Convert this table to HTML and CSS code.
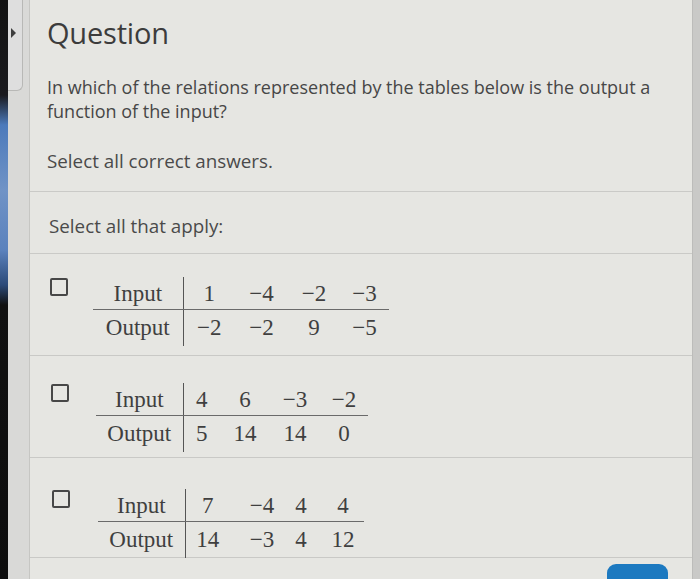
FILE: index.html
```html
<!DOCTYPE html>
<html>
<head>
<meta charset="utf-8">
<link rel="stylesheet" href="styles.css">
</head>
<body>
<div class="edge"></div>
<div class="gutter">
  <div class="tab"><span class="arrow"></span></div>
</div>
<main class="panel">
  <section class="head">
    <h1 class="title">Question</h1>
    <p class="prompt">In which of the relations represented by the tables below is the output a function of the input?</p>
    <p class="hint">Select all correct answers.</p>
  </section>
  <section class="instr">Select all that apply:</section>

  <section class="option o1">
    <span class="check"></span>
    <table class="rel t1">
      <colgroup><col class="c0"><col class="c1"><col class="c2"><col class="c3"><col class="c4"></colgroup>
      <tr class="hdr"><th>Input</th><td>1</td><td>−4</td><td>−2</td><td>−3</td></tr>
      <tr><th>Output</th><td>−2</td><td>−2</td><td>9</td><td>−5</td></tr>
    </table>
  </section>

  <section class="option o2">
    <span class="check"></span>
    <table class="rel t2">
      <colgroup><col class="c0"><col class="c1"><col class="c2"><col class="c3"><col class="c4"></colgroup>
      <tr class="hdr"><th>Input</th><td>4</td><td>6</td><td>−3</td><td>−2</td></tr>
      <tr><th>Output</th><td>5</td><td>14</td><td>14</td><td>0</td></tr>
    </table>
  </section>

  <section class="option o3">
    <span class="check"></span>
    <table class="rel t3">
      <colgroup><col class="c0"><col class="c1"><col class="c2"><col class="c3"><col class="c4"></colgroup>
      <tr class="hdr"><th>Input</th><td>7</td><td>−4</td><td>4</td><td>4</td></tr>
      <tr><th>Output</th><td>14</td><td>−3</td><td>4</td><td>12</td></tr>
    </table>
  </section>

  <footer class="foot">
    <button class="submit" type="button"></button>
  </footer>
</main>
<div class="rightedge"></div>
</body>
</html>
```

FILE: styles.css
```css
html, body {
  margin: 0;
  padding: 0;
}
body {
  width: 700px;
  height: 579px;
  overflow: hidden;
  display: flex;
  background: #d8d8d6;
  font-family: "Open Sans", "Liberation Sans", sans-serif;
  color: #444;
}
.edge {
  width: 8px;
  flex: none;
  background: linear-gradient(to bottom, #121212 0, #1a1a1e 95px, #4c7abb 125px, #7093c6 190px, #5b82bd 250px, #2c4a78 285px, #111 305px, #0d0d0d 579px);
}
.gutter {
  width: 21px;
  flex: none;
  background: #d9d9d7;
}
.tab {
  width: 14px;
  height: 90px;
  border-right: 1px solid #b8b8b6;
  border-bottom: 1px solid #b8b8b6;
  border-bottom-right-radius: 6px;
  background: #dedede;
  position: relative;
}
.arrow {
  position: absolute;
  left: 3px;
  top: 28px;
  width: 0;
  height: 0;
  border-top: 5px solid transparent;
  border-bottom: 5px solid transparent;
  border-left: 5px solid #3e3e3e;
}
.panel {
  flex: 1;
  display: flex;
  flex-direction: column;
  background: #e6e6e2;
  border-left: 1px solid #c6c6c3;
  border-right: 1px solid #bcbcba;
}
.rightedge {
  width: 7px;
  flex: none;
  background: #c9c9c7;
}
.head {
  height: 191px;
  flex: none;
  padding: 0 17px;
  border-bottom: 1px solid #cacac7;
  box-sizing: content-box;
}
.title {
  margin: 13px 0 0;
  font-size: 29px;
  font-weight: 400;
  line-height: 40px;
  color: #3c3c3c;
  letter-spacing: -0.2px;
}
.prompt {
  margin: 22px 0 0;
  font-size: 18px;
  line-height: 24px;
  color: #474747;
}
.hint {
  margin: 26px 0 0;
  font-size: 18.8px;
  line-height: 24px;
  color: #4a4a4a;
}
.instr {
  height: 62px;
  flex: none;
  box-sizing: border-box;
  padding: 22px 0 0 19px;
  font-size: 18.8px;
  line-height: 24px;
  color: #4a4a4a;
  border-bottom: 1px solid #cacac7;
}
.option {
  height: 102px;
  flex: none;
  box-sizing: border-box;
  display: flex;
  align-items: flex-start;
  padding: 23px 0 0 20px;
  border-bottom: 1px solid #c9c9c6;
}
.o2 { padding-top: 27px; padding-left: 21px; }
.o3 { height: 100px; padding-top: 31px; padding-left: 22px; }
.check {
  width: 14px;
  height: 14px;
  border: 2px solid #474747;
  border-radius: 2px;
  margin-top: 1px;
  flex: none;
}
.rel {
  border-collapse: collapse;
  font-family: "Liberation Serif", "Times New Roman", serif;
  font-size: 23px;
  color: #3f3f3f;
  margin-left: 25px;
  table-layout: fixed;
}
.o2 .rel { margin-left: 27px; }
.o3 .rel { margin-left: 28px; }
.rel th {
  font-weight: 400;
  text-align: center;
  border-right: 1.5px solid #555;
  padding: 0;
}
.rel td {
  text-align: center;
  padding: 0;
}
.rel .hdr th, .rel .hdr td {
  border-bottom: 1.5px solid #6a6a6a;
  height: 30px;
  vertical-align: middle;
  padding-top: 2px;
}
.rel tr + tr th, .rel tr + tr td {
  height: 36px;
  vertical-align: middle;
  padding-bottom: 0;
}
.t1 .c0 { width: 90px; }
.t1 .c1 { width: 52px; }
.t1 .c2 { width: 53px; }
.t1 .c3 { width: 52px; }
.t1 .c4 { width: 49px; }
.t2 .c0 { width: 87px; }
.t2 .c1 { width: 37px; }
.t2 .c2 { width: 50px; }
.t2 .c3 { width: 50px; }
.t2 .c4 { width: 48px; }
.t3 .c0 { width: 87px; }
.t3 .c1 { width: 45px; }
.t3 .c2 { width: 64px; }
.t3 .c3 { width: 14px; }
.t3 .c4 { width: 56px; }
.t3 td:nth-child(5) { padding-left: 14px; }
.foot {
  flex: 1;
  position: relative;
}
.submit {
  position: absolute;
  left: 577px;
  top: 6px;
  width: 61px;
  height: 30px;
  border: none;
  border-radius: 9px;
  background: #1c79c0;
  padding: 0;
}
```
